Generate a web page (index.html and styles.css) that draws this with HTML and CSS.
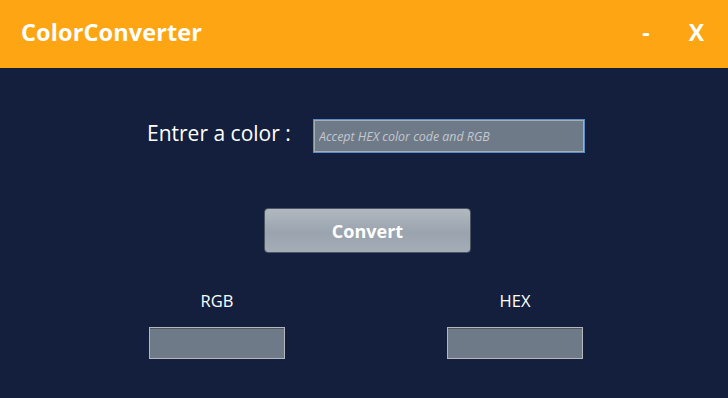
FILE: index.html
```html
<!DOCTYPE html>
<html lang="en">
<head>
    <meta charset="UTF-8">
    <meta name="viewport" content="width=device-width, initial-scale=1.0">
    <title>ColorConverter</title>
    <link rel="stylesheet" href="styles.css">
</head>
<body>
    <header>
        <span class="app-name">ColorConverter</span>
        <div class="window-buttons">
            <span class="win-btn minimize">-</span>
            <span class="win-btn close">X</span>
        </div>
    </header>

    <main>
        <div class="input-row">
            <label for="color-input">Entrer a color :</label>
            <input id="color-input" type="text" placeholder="Accept HEX color code and RGB">
        </div>

        <div class="button-row">
            <button class="convert-btn">Convert</button>
        </div>

        <div class="results">
            <div class="result">
                <span class="result-title">RGB</span>
                <div class="result-box"></div>
            </div>
            <div class="result">
                <span class="result-title">HEX</span>
                <div class="result-box"></div>
            </div>
        </div>
    </main>
</body>
</html>
```

FILE: styles.css
```css
body {
    margin: 0;
    height: 398px;
    font-family: 'Open Sans', 'Noto Sans', sans-serif;
    background-color: #131f3c;
    color: #ffffff;
    overflow: hidden;
}

header {
    background-color: #fda513;
    height: 68px;
    display: flex;
    align-items: center;
    justify-content: space-between;
    padding: 0 24px 0 21px;
}

header .app-name {
    font-size: 23.5px;
    font-weight: bold;
    letter-spacing: 0.1px;
    margin-top: -4px;
}

.window-buttons {
    display: flex;
    align-items: center;
    gap: 39px;
    margin-top: -4px;
}

.win-btn {
    font-size: 23px;
    font-weight: bold;
    cursor: pointer;
}

.input-row {
    display: flex;
    align-items: center;
    padding-left: 147px;
    margin-top: 51px;
}

.input-row label {
    font-size: 21px;
    width: 166px;
    margin-top: -6px;
}

.input-row input {
    width: 265px;
    height: 32px;
    box-sizing: content-box;
    padding: 0 0 0 5px;
    margin: 0;
    background-color: #6e7a88;
    border: 1px solid #5b8cc6;
    box-shadow: inset 0 0 0 1px #a7adb4;
    font-family: 'Open Sans', sans-serif;
    font-size: 12.4px;
    font-style: italic;
    color: #ffffff;
    outline: none;
}

.input-row input::placeholder {
    color: #c3c8ce;
}

.button-row {
    display: flex;
    padding-left: 264px;
    margin-top: 55px;
}

.convert-btn {
    width: 207px;
    height: 45px;
    border: 1px solid #4b5563;
    border-radius: 4px;
    background: linear-gradient(to bottom, #b1b8c0, #9aa4ae 55%, #a4adb6);
    color: #ffffff;
    font-family: 'Open Sans', sans-serif;
    font-size: 18px;
    font-weight: bold;
    cursor: pointer;
}

.results {
    display: flex;
    gap: 162px;
    padding-left: 149px;
    margin-top: 36px;
}

.result {
    display: flex;
    flex-direction: column;
    align-items: center;
    width: 136px;
}

.result-title {
    font-size: 16.5px;
    height: 23px;
    margin-bottom: 15px;
}

.result-box {
    width: 134px;
    height: 30px;
    background-color: #6e7a88;
    border: 1px solid #b4b8bd;
    box-shadow: inset 0 1px 0 #4f5761;
}
```
